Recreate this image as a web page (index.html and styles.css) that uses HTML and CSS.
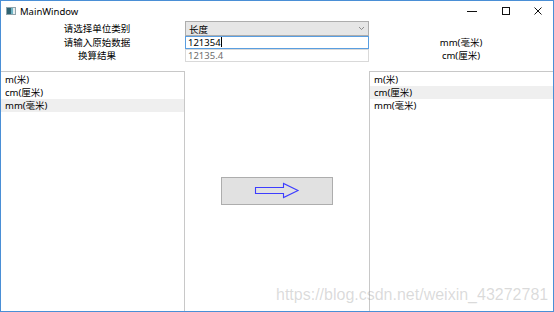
FILE: index.html
```html
<!DOCTYPE html>
<html lang="zh">
<head>
    <meta charset="UTF-8">
    <meta name="viewport" content="width=device-width, initial-scale=1.0">
    <title>MainWindow</title>
    <link rel="stylesheet" href="styles.css">
</head>
<body>

    <div class="window">
        <div class="titlebar">
            <svg class="app-icon" width="10" height="8" viewBox="0 0 10 8">
                <rect x="0.5" y="0.5" width="9" height="7" fill="#e8eef0" stroke="#8fa3ab"/>
                <rect x="1" y="1" width="4" height="6" fill="#2f6372"/>
                <rect x="5" y="1" width="2" height="6" fill="#6fb4c4"/>
            </svg>
            <span class="title">MainWindow</span>
            <div class="controls">
                <div class="ctl">
                    <svg width="10" height="10" viewBox="0 0 10 10"><path d="M0 5.5H10" stroke="#111" stroke-width="1"/></svg>
                </div>
                <div class="ctl">
                    <svg width="10" height="10" viewBox="0 0 10 10"><rect x="1.5" y="1.5" width="7" height="7" fill="none" stroke="#111" stroke-width="1"/></svg>
                </div>
                <div class="ctl close">
                    <svg width="10" height="10" viewBox="0 0 10 10"><path d="M1.5 1.5L8.5 8.5M8.5 1.5L1.5 8.5" stroke="#111" stroke-width="1"/></svg>
                </div>
            </div>
        </div>

        <div class="form">
            <div class="label">请选择单位类别</div>
            <div class="combo">
                <span>长度</span>
                <svg width="5" height="3" viewBox="0 0 5 3"><path d="M0 0L2.5 2.5L5 0" fill="none" stroke="#777" stroke-width="0.8"/></svg>
            </div>
            <div></div>

            <div class="label">请输入原始数据</div>
            <div class="field active">121354<span class="caret"></span></div>
            <div class="unit">mm(毫米)</div>

            <div class="label">换算结果</div>
            <div class="field result">12135.4</div>
            <div class="unit">cm(厘米)</div>
        </div>

        <div class="panes">
            <ul class="list from">
                <li>m(米)</li>
                <li>cm(厘米)</li>
                <li class="current">mm(毫米)</li>
            </ul>
            <div class="center">
                <button class="convert">
                    <svg width="112" height="28" viewBox="0 0 112 28">
                        <path d="M34.5 10.5H62.5V6.5L77 13.5L62.5 20.5V16.5H34.5Z" fill="none" stroke="#3d3dff" stroke-width="1.1"/>
                    </svg>
                </button>
            </div>
            <ul class="list to">
                <li>m(米)</li>
                <li class="current">cm(厘米)</li>
                <li>mm(毫米)</li>
            </ul>
        </div>

        <div class="watermark">https://blog.csdn.net/weixin_43272781</div>
    </div>

</body>
</html>
```

FILE: styles.css
```css
body {
    margin: 0;
    padding: 0;
    font-family: "Noto Sans", "Noto Sans CJK SC", sans-serif;
    font-size: 9.5px;
    color: #000;
    background: #fff;
}

.window {
    position: relative;
    width: 554px;
    height: 312px;
    box-sizing: border-box;
    border: 1px solid #4a8fd6;
    display: flex;
    flex-direction: column;
    background: #fff;
    overflow: hidden;
}

/* title bar */
.titlebar {
    height: 20px;
    flex: none;
    display: flex;
    align-items: center;
}

.app-icon {
    margin-left: 5px;
}

.title {
    margin-left: 4px;
    font-size: 9.5px;
}

.controls {
    margin-left: auto;
    height: 100%;
    display: flex;
}

.controls .ctl {
    width: 34px;
    display: flex;
    align-items: center;
    justify-content: center;
}

.controls .ctl.close {
    width: 30px;
}

/* form rows */
.form {
    flex: none;
    display: grid;
    grid-template-columns: 184px 184px 184px;
    grid-template-rows: 15px 13px 13px;
}

.form .label {
    text-align: center;
    padding-left: 8px;
    line-height: 13px;
    align-self: center;
}

.form .unit {
    text-align: center;
    line-height: 13px;
}

.combo {
    box-sizing: border-box;
    border: 1px solid #adadad;
    background: #e6e6e6;
    display: flex;
    align-items: center;
    justify-content: space-between;
    padding: 0 4px 0 3px;
}

.field {
    box-sizing: border-box;
    border: 1px solid #d9d9d9;
    padding: 0 2px;
    line-height: 11px;
    white-space: nowrap;
}

.field.active {
    border-color: #5a9ee0;
}

.field.result {
    color: #6d6d6d;
}

.caret {
    display: inline-block;
    width: 1px;
    height: 10px;
    background: #000;
    vertical-align: -1px;
}

/* lists + button */
.panes {
    flex: 1;
    margin-top: 9px;
    display: grid;
    grid-template-columns: 184px 184px 184px;
}

.list {
    margin: 0;
    padding: 1px 0 0;
    list-style: none;
    border: 1px solid #c8c8c8;
    border-bottom: none;
}

.list.from {
    border-left: none;
}

.list.to {
    border-right: none;
}

.list li {
    height: 13px;
    line-height: 13px;
    padding-left: 4px;
    white-space: nowrap;
}

.list li.current {
    background: #efefef;
}

.center {
    display: flex;
    align-items: center;
    justify-content: center;
}

.convert {
    width: 112px;
    height: 28px;
    padding: 0;
    box-sizing: border-box;
    border: 1px solid #adadad;
    background: #e1e1e1;
    display: block;
}

.convert svg {
    display: block;
    margin: -1px;
}

.watermark {
    position: absolute;
    left: 275px;
    top: 285px;
    font-family: "Liberation Sans", Arial, sans-serif;
    font-size: 16px;
    color: rgba(150, 150, 150, 0.35);
    white-space: nowrap;
}
```
